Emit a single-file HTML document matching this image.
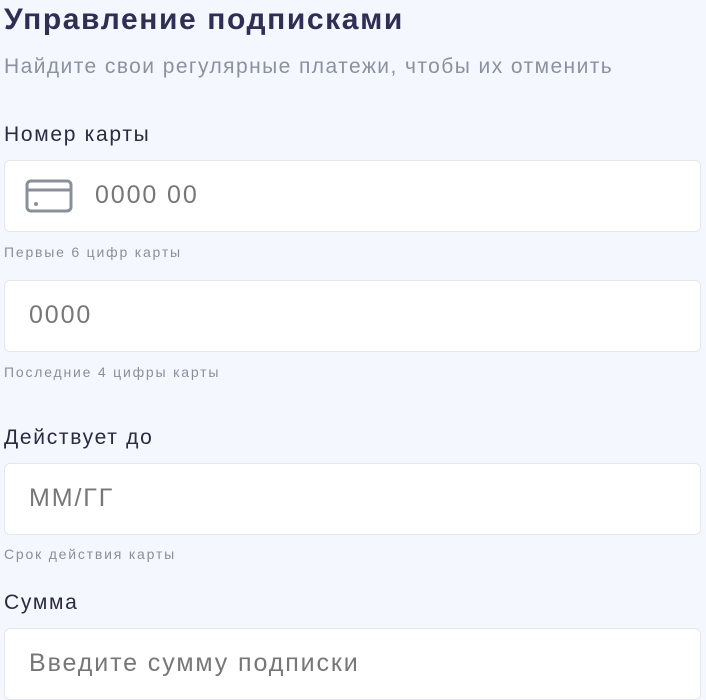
<!DOCTYPE html>
<html><head><meta charset="utf-8"><style>
html,body{margin:0;padding:0;background:#f5f7fe;width:706px;height:697px;overflow:hidden;font-family:"Liberation Sans","DejaVu Sans",sans-serif;}
.a{position:absolute;white-space:nowrap;}
h1{position:absolute;left:4px;top:3px;margin:0;font-size:30px;font-weight:bold;color:#2f2e55;letter-spacing:1.6px;}
.sub{left:4px;top:55px;font-size:21px;color:#8c929c;letter-spacing:1.43px;}
.lab{left:4px;font-size:21px;color:#2a2a40;letter-spacing:1.7px;}
.inp{position:absolute;left:4px;width:697px;height:70px;background:#fff;border:1px solid #e4e7ee;border-radius:6px;box-sizing:border-box;}
.val{position:absolute;top:20px;font-size:25px;color:#777;letter-spacing:1.9px;}
.help{left:4px;font-size:14px;color:#8a8f9a;letter-spacing:1.8px;}
</style></head><body>
<h1>Управление подписками</h1>
<div class="a sub">Найдите свои регулярные платежи, чтобы их отменить</div>
<div class="a lab" style="top:123px">Номер карты</div>
<div class="inp" style="top:160px;height:72px">
<svg style="position:absolute;left:20px;top:18px" width="50" height="36" viewBox="0 0 50 36"><rect x="2" y="2" width="44" height="30" rx="4" fill="none" stroke="#8a8f9a" stroke-width="3"/><line x1="2" y1="11" x2="46" y2="11" stroke="#8a8f9a" stroke-width="3"/><circle cx="11" cy="25" r="2" fill="#8a8f9a"/></svg>
<div class="val" style="left:90px">0000 00</div></div>
<div class="a help" style="top:244px">Первые 6 цифр карты</div>
<div class="inp" style="top:280px;height:72px"><div class="val" style="left:24px">0000</div></div>
<div class="a help" style="top:364px">Последние 4 цифры карты</div>
<div class="a lab" style="top:426px">Действует до</div>
<div class="inp" style="top:463px;height:72px"><div class="val" style="left:24px">ММ/ГГ</div></div>
<div class="a help" style="top:546px">Срок действия карты</div>
<div class="a lab" style="top:591px">Сумма</div>
<div class="inp" style="top:628px;height:72px"><div class="val" style="left:24px">Введите сумму подписки</div></div>
</body></html>
